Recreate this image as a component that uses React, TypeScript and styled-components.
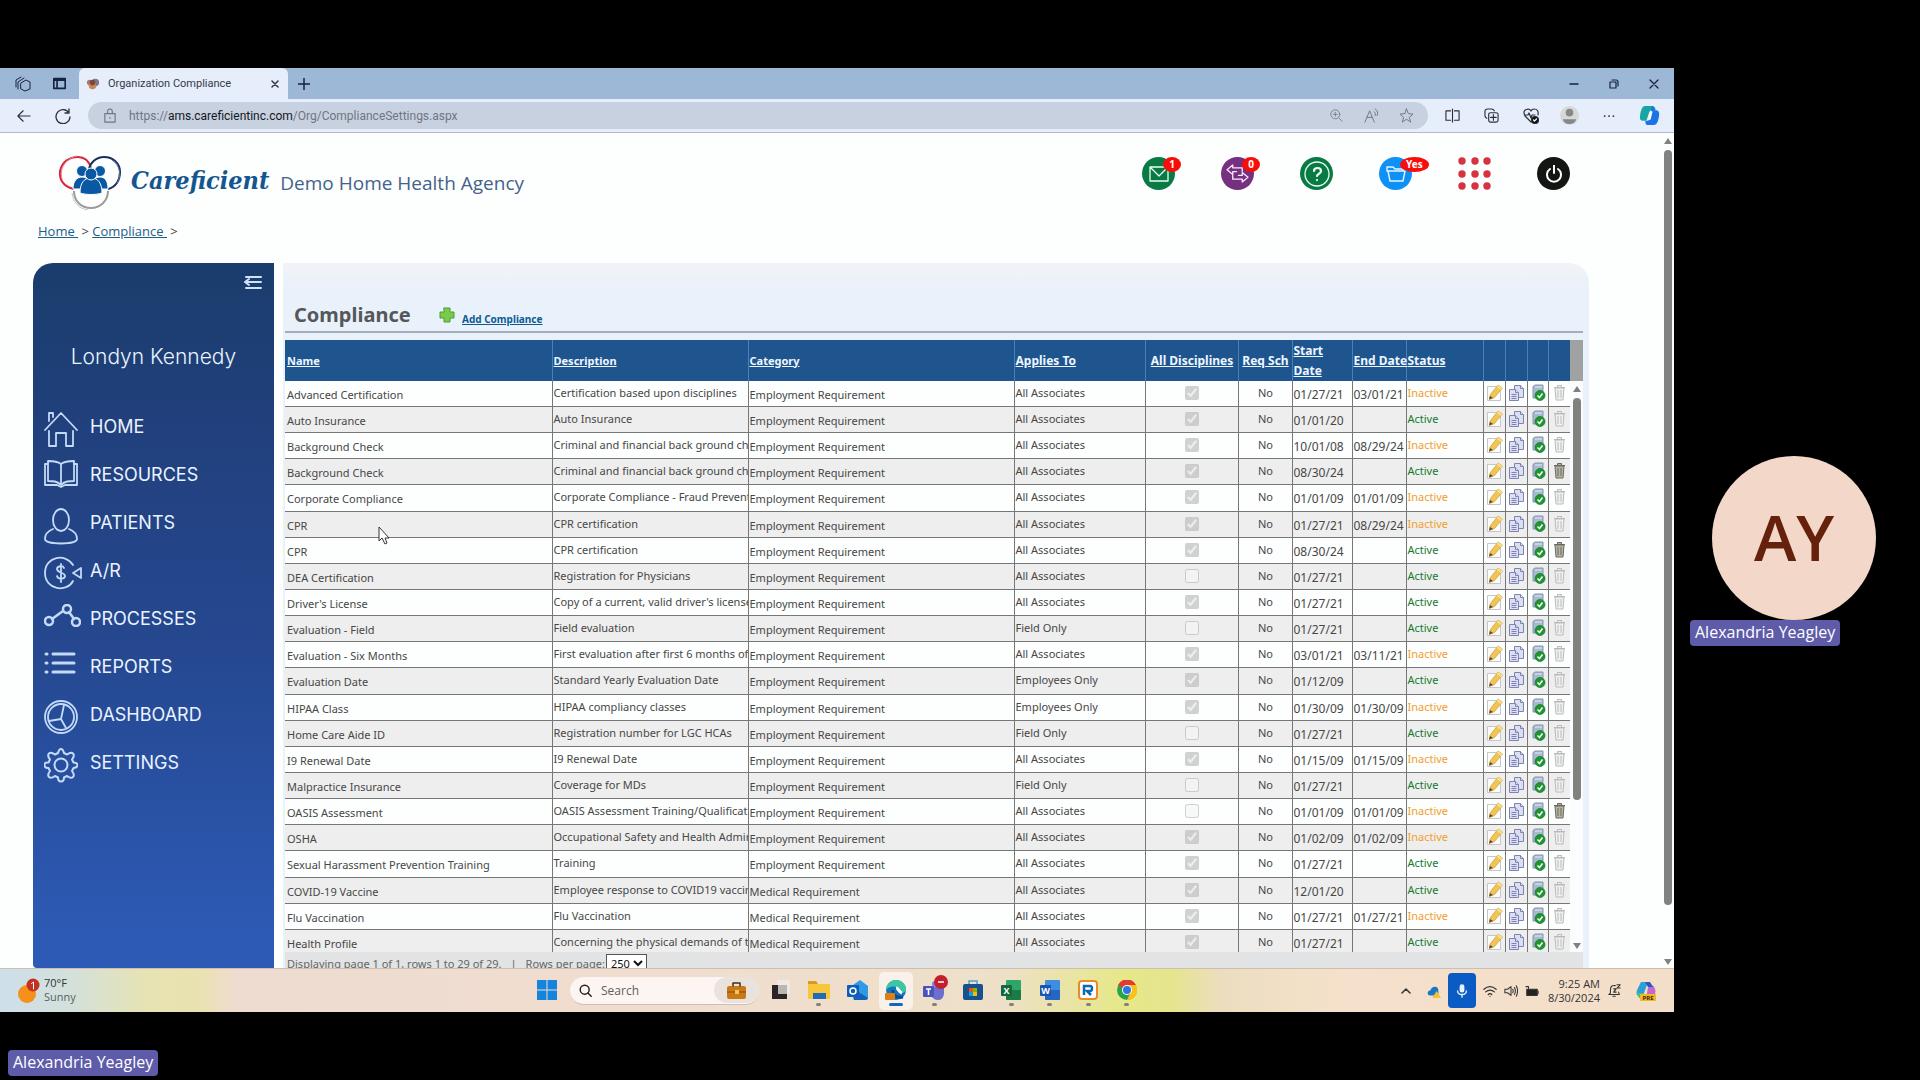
import React from "react";
import styled, { createGlobalStyle } from "styled-components";

const ui = `"Open Sans", "Noto Sans", sans-serif`;
const tahoma = `"Noto Sans", "Open Sans", sans-serif`;
const chrome = `Roboto, "Open Sans", sans-serif`;
const display = `Inter, Lato, sans-serif`;

const Global = createGlobalStyle`
  * { box-sizing: border-box; }
  html, body, #root { height: 100%; }
  body { margin: 0; background: #000; font-family: ${ui}; overflow: hidden; }
  button { border: 0; padding: 0; background: none; font: inherit; color: inherit; }
  svg { display: block; flex: none; }
`;

/* ---------- meeting stage ---------- */
const Meeting = styled.main`
  height: 100vh;
  display: grid;
  grid-template-columns: minmax(0, 1fr) 246px;
  grid-template-rows: 68px minmax(0, 1fr) 68px;
  background: #000;
`;
const Shared = styled.section`
  grid-row: 2;
  grid-column: 1;
  min-width: 0;
  min-height: 0;
  display: flex;
  flex-direction: column;
  background: #fdfefe;
`;
const Rail = styled.aside`
  grid-row: 2;
  grid-column: 2;
  display: flex;
  flex-direction: column;
  align-items: flex-start;
  justify-content: center;
  padding: 22px 16px 0;
`;
const Avatar = styled.div`
  width: 164px;
  height: 164px;
  margin-left: 22px;
  padding-bottom: 4px;
  border-radius: 50%;
  background: #f3d7c8;
  color: #66210c;
  display: flex;
  align-items: center;
  justify-content: center;
  font-size: 64px;
  font-weight: 600;
`;
const NameTag = styled.div`
  height: 26px;
  padding: 0 5px;
  border-radius: 4px;
  background: #5e5ca8;
  color: #fff;
  font-size: 16px;
  line-height: 25px;
  white-space: nowrap;
`;
const Presenter = styled.footer`
  grid-row: 3;
  grid-column: 1 / -1;
  display: flex;
  align-items: flex-end;
  padding: 0 8px 4px;
`;

/* ---------- browser ---------- */
const TabBar = styled.header`
  flex: none;
  height: 31px;
  display: flex;
  align-items: center;
  background: #9db7d7;
  color: #16233c;
`;
const TabTools = styled.div`
  width: 79px;
  display: flex;
  gap: 20px;
  padding-left: 14px;
`;
const Tab = styled.div`
  width: 209px;
  height: 31px;
  display: flex;
  align-items: center;
  gap: 8px;
  padding: 0 6px;
  border-radius: 6px 6px 0 0;
  background: #e7eefb;
  color: #333a46;
  font: 11px ${chrome};
`;
const TabTitle = styled.span`
  flex: 1;
  white-space: nowrap;
`;
const IconButton = styled.button`
  width: ${(p: { $w?: number }) => p.$w ?? 16}px;
  height: 24px;
  display: flex;
  align-items: center;
  justify-content: center;
`;
const NewTab = styled(IconButton)`
  margin-left: 8px;
`;
const WindowButtons = styled.div`
  margin-left: auto;
  display: flex;
`;
const Toolbar = styled.div`
  flex: none;
  height: 34px;
  display: flex;
  align-items: center;
  background: #e7eefb;
  border-bottom: 1px solid #b3bacb;
  color: #2b2f3a;
`;
const NavButtons = styled.div`
  width: 88px;
  display: flex;
  padding-left: 4px;
`;
const Address = styled.div`
  flex: 1;
  height: 27px;
  display: flex;
  align-items: center;
  gap: 12px;
  padding: 0 4px 0 14px;
  border-radius: 14px;
  background: #c8d1df;
  color: #6d7684;
  font: 12px ${chrome};
`;
const Url = styled.span`
  flex: 1;
  white-space: nowrap;
  b { color: #14181f; font-weight: 400; }
`;
const AddressTools = styled.div`
  display: flex;
`;
const ToolRow = styled.div`
  display: flex;
  padding: 0 4px;
`;

/* ---------- site ---------- */
const Viewport = styled.div`
  flex: 1;
  min-height: 0;
  display: flex;
  background: #fdfefe;
`;
const Site = styled.div`
  flex: 1;
  min-width: 0;
  display: flex;
  flex-direction: column;
  overflow: hidden;
`;
const Scroller = styled.div`
  flex: none;
  width: ${(p: { $w: number }) => p.$w}px;
  display: flex;
  flex-direction: column;
  align-items: center;
  padding: 5px 0 3px;
  gap: 6px;
`;
const Thumb = styled.div`
  width: 8px;
  flex: ${(p: { $grow: number }) => p.$grow};
  border-radius: 4px;
  background: #7f827f;
`;
const Spare = styled.div`
  flex: ${(p: { $grow: number }) => p.$grow};
`;
const SiteHeader = styled.header`
  flex: none;
  height: 88px;
  display: flex;
  align-items: flex-start;
  padding: 22px 92px 0 58px;
`;
const Brand = styled.span`
  margin: 8px 0 0 9px;
  color: #14568f;
  font-family: "DejaVu Serif Condensed", "DejaVu Serif", "Liberation Serif", serif;
  font-size: 25px;
  font-style: italic;
  font-weight: 700;
  line-height: 36px;
`;
const Agency = styled.span`
  margin: 12px 0 0 11px;
  color: #45628a;
  font-size: 19px;
  line-height: 32px;
  white-space: nowrap;
`;
const Shortcuts = styled.nav`
  margin-left: auto;
  padding-top: 2px;
  display: flex;
  gap: 46px;
`;
const Shortcut = styled.button`
  position: relative;
  width: 33px;
  height: 33px;
  border-radius: 50%;
  background: ${(p: { $bg: string }) => p.$bg};
  display: flex;
  align-items: center;
  justify-content: center;
`;
const Badge = styled.span`
  position: absolute;
  top: 0;
  left: 21px;
  min-width: 18px;
  height: 15px;
  padding: 0 6px;
  border-radius: 50%;
  background: #f60f0a;
  color: #fff;
  font: bold 10px/15px ${tahoma};
`;
const Crumbs = styled.nav`
  flex: none;
  height: 42px;
  padding-left: 38px;
  color: #444;
  font: 13px/20px ${ui};
  a { color: #1c6087; white-space: pre; }
`;
const Columns = styled.div`
  flex: 1;
  min-height: 0;
  display: flex;
  align-items: stretch;
  gap: 9px;
  padding: 0 73px 0 33px;
`;
const Sidebar = styled.nav`
  flex: none;
  width: 241px;
  border-radius: 20px 0 0 4px;
  background: linear-gradient(#1a3d6c, #21407d 24%, #254890 55%, #2d5ab4 95%);
  color: #eaf3ff;
  font-family: ${display};
  overflow: hidden;
`;
const Collapse = styled.button`
  display: block;
  margin: 12px 12px 0 auto;
`;
const UserName = styled.div`
  padding: 52px 0 40px;
  text-align: center;
  font-size: 21px;
  font-weight: 300;
  line-height: 30px;
`;
const MenuLink = styled.a`
  height: 48px;
  display: flex;
  align-items: flex-start;
  padding-left: 11px;
  color: inherit;
  font-size: 18px;
  line-height: 29px;
  text-decoration: none;
`;
const MenuIcon = styled.span`
  width: 46px;
`;
const Panel = styled.section`
  flex: 1;
  min-width: 0;
  border-radius: 0 20px 0 0;
  background: linear-gradient(#f1f3f8, #e9f1fb 30px);
  color: #474747;
  font-family: ${tahoma};
`;
const PanelInner = styled.div`
  padding: 0 6px 0 2px;
`;
const TitleBar = styled.div`
  height: 70px;
  display: flex;
  align-items: flex-end;
  padding: 0 0 1px 9px;
  border-bottom: 2px solid #a5adba;
`;
const Title = styled.h1`
  margin: 0;
  width: 145px;
  color: #55585a;
  font-size: 20px;
  line-height: 30px;
`;
const AddLink = styled.a`
  display: flex;
  align-items: flex-end;
  gap: 7px;
  padding-bottom: 3px;
  color: #0c5c93;
  font-size: 10px;
  font-weight: 700;
  line-height: 15px;
  svg { margin-bottom: 4px; }
`;
const GridFrame = styled.div`
  height: 612px;
  margin-top: 7px;
  display: flex;
  overflow: hidden;
`;
const TableClip = styled.div`
  flex: 1;
  min-width: 0;
  overflow: hidden;
`;
const GridScroll = styled.div`
  flex: none;
  width: 13px;
  display: flex;
  flex-direction: column;
  background: #fbfcfe;
`;
const Corner = styled.div`
  height: 41px;
  background: #a0a2a2;
`;
const ScrollTrack = styled(Scroller)`
  flex: 1;
`;
const Table = styled.table`
  width: 100%;
  height: 616px;
  table-layout: fixed;
  border-collapse: collapse;
  font-size: 11px;
  line-height: 16px;
`;
const HeadCell = styled.th`
  height: 41px;
  padding: 0 0 0 1px;
  background: #1f558f;
  border-left: 1px solid #4d7fb3;
  color: #eef6ff;
  text-align: ${(p: { $center?: boolean }) => (p.$center ? "center" : "left")};
  font-size: ${(p: { $size?: number }) => p.$size ?? 11}px;
  line-height: 20px;
  white-space: ${(p: { $wrap?: boolean }) => (p.$wrap ? "normal" : "nowrap")};
  &:first-child { border-left: 0; padding-left: 2px; }
  a { color: inherit; }
`;
const Row = styled.tr`
  background: #fdfefe;
  border-bottom: 1px solid #777;
  &:nth-child(even) { background: #eeeeee; }
`;
const Cell = styled.td`
  padding: ${(p: { $low?: boolean; $center?: boolean; $date?: boolean }) => (p.$low || p.$date ? "3px 0 0 1px" : "0 0 1px 1px")};
  border-left: 1px solid #777;
  text-align: ${(p) => (p.$center ? "center" : "left")};
  font-size: ${(p) => (p.$date ? 12 : 11)}px;
  white-space: nowrap;
  overflow: hidden;
  &:first-child { border-left: 0; padding-left: 2px; }
`;
const Status = styled.span`
  color: ${(p: { $active: boolean }) => (p.$active ? "#167a2e" : "#f2a02c")};
`;
const Check = styled.input`
  display: block;
  width: 14px;
  height: 14px;
  margin: 0 auto;
`;
const RowAction = styled.button`
  display: flex;
  align-items: center;
  justify-content: center;
  width: 100%;
`;
const Pager = styled.div`
  height: 24px;
  display: flex;
  align-items: center;
  gap: 9px;
  padding: 0 0 2px 2px;
  background: #e1e3e4;
  color: #666;
  font-size: 11px;
  white-space: nowrap;
`;
const PageSize = styled.select`
  height: 18px;
  margin-left: 1px;
  padding: 0;
  border: 1px solid #555;
  background: #fff;
  color: #111;
  font: 11px ${tahoma};
`;
const Pointer = styled.svg`
  position: absolute;
  left: 378px;
  top: 526px;
`;

/* ---------- taskbar ---------- */
const Taskbar = styled.footer`
  flex: none;
  height: 44px;
  display: grid;
  grid-template-columns: 1fr auto 1fr;
  align-items: center;
  border-top: 1px solid #cbbfb4;
  background: linear-gradient(90deg, #cddfea 0, #d3e0dc 4%, #e7e3b2 9%, #e9e2b0 12%, #efdcd0 14%, #f0ddd0 40%, #eee0c8 60%, #e6e889 67%, #e5e58e 70%, #ecddc0 73%, #f5e1cb 80%, #f3dfc9 100%);
  color: #333;
  font-size: 11px;
  line-height: 14px;
`;
const Weather = styled.button`
  display: flex;
  align-items: center;
  gap: 4px;
  padding: 0 0 2px 18px;
  text-align: left;
  span { display: block; color: #5b5f60; }
`;
const Dock = styled.div`
  display: flex;
  align-items: center;
`;
const Apps = styled.div`
  width: 381px;
  display: flex;
  justify-content: space-between;
`;
const SearchBox = styled.label`
  width: 189px;
  height: 28px;
  display: flex;
  align-items: center;
  gap: 9px;
  margin: 0 4px 0 6px;
  padding-left: 9px;
  border-radius: 14px;
  background: #fdf5f1;
  border-bottom: 1px solid #cdbfb6;
  input {
    flex: 1;
    min-width: 0;
    padding: 0;
    border: 0;
    outline: 0;
    background: none;
    color: #555;
    font: 12px ${ui};
  }
  input::placeholder { color: #5f5f5f; opacity: 1; }
`;
const Work = styled.span`
  width: 45px;
  height: 26px;
  border-radius: 13px;
  background: #eae3dd;
  display: flex;
  align-items: center;
  justify-content: center;
`;
const DockButton = styled.button`
  width: 34px;
  height: 38px;
  border-radius: 5px;
  display: flex;
  flex-direction: column;
  align-items: center;
  gap: 3px;
  padding-top: 8px;
  background: ${(p: { $mark?: string }) => (p.$mark === "active" ? "#faf1ea" : "none")};
  &::after {
    content: "";
    width: ${(p) => (p.$mark === "active" ? 14 : 5)}px;
    height: 3px;
    border-radius: 2px;
    background: ${(p) => (p.$mark === "active" ? "#1566c0" : p.$mark === "open" ? "#85807a" : "transparent")};
  }
`;
const Tray = styled.div`
  display: flex;
  align-items: center;
  justify-content: flex-end;
  padding-right: 18px;
`;
const Mic = styled.button`
  width: 28px;
  height: 35px;
  margin-right: 4px;
  border-radius: 4px;
  background: #0a5bc4;
  display: flex;
  align-items: center;
  justify-content: center;
`;
const Clock = styled.time`
  width: 58px;
  margin-right: 6px;
  font-size: 11px;
  text-align: right;
`;
const TrayButton = styled.button`
  width: ${(p: { $w: number }) => p.$w}px;
  display: flex;
  justify-content: center;
`;
const CopilotPre = styled.button`
  margin-left: 13px;
`;

/* ---------- drawings ---------- */
type G = { w?: number; h?: number; box?: string; sw?: number; fill?: string; stroke?: string; children: React.ReactNode };
const Glyph = ({ w = 16, h, box = "0 0 16 16", sw = 1, fill = "none", stroke = "currentColor", children }: G) => (
  <svg width={w} height={h ?? w} viewBox={box} fill={fill} stroke={stroke} strokeWidth={sw} strokeLinecap="round" strokeLinejoin="round" aria-hidden="true">
    {children}
  </svg>
);

const Logo = () => (
  <svg width="64" height="55" viewBox="0 0 64 55" fill="none" aria-hidden="true">
    <path d="M16 34C6 32 1 25 2 16 4 7 11 2 20 2c6 0 11 4 13 11" stroke="#d8263c" strokeWidth="2" />
    <path d="M4 24C1 12 9 3 19 1" stroke="#e8808c" strokeWidth="1" />
    <path d="M31 14c1-6 7-12 15-12 9 0 16 6 16 15 0 8-4 15-12 17" stroke="#17305e" strokeWidth="2" />
    <path d="M54 5c8 5 10 16 5 23" stroke="#5672a4" strokeWidth="1" />
    <path d="M16 36c0 10 7 17 17 17 9 0 17-7 17-17" stroke="#9a9c9e" strokeWidth="2" />
    <path d="M14 38c1 9 7 16 16 17" stroke="#c4c5c7" strokeWidth="1" />
    <g fill="#0a58a4" stroke="#fdfefe" strokeWidth="1">
      <circle cx="24" cy="16" r="5.500" />
      <circle cx="42" cy="16" r="5.500" />
      <path d="M15 34c0-8 4-12 9-12s9 4 9 12z" />
      <path d="M33 34c0-8 4-12 9-12s8 4 8 12z" />
      <path d="M22 38c0-10 4-15 11-15s11 5 11 15c-6 2-16 2-22 0z" />
      <circle cx="33" cy="19" r="6" />
    </g>
  </svg>
);

const menu: [string, React.ReactNode, number, number][] = [
  ["HOME", <><path d="M1 18 17 1l16 17M5 9V1h4v4" /><path d="M5 19v15h7V21h10v13h7V19" /></>, 34, 35],
  ["RESOURCES", <><path d="M17 4C13 1 9 1 4 1v20c5 0 9 0 13 4 4-4 8-4 13-4V1c-5 0-9 0-13 3zV25" /><path d="M4 4H1v21h12l4 2 4-2h12V4h-3" /></>, 34, 28],
  ["PATIENTS", <><ellipse cx="17" cy="12" rx="8" ry="11" /><path d="M9 21c-5 2-8 6-8 10 0 6 32 6 32 0 0-4-3-8-8-10" /></>, 34, 37],
  ["A/R", <><path d="M29 9C22-3 1 0 1 17s22 20 28 8" /><path d="M37 12v10l-8-5z" /><path d="M20 12c-1-3-7-2-7 1 0 4 8 3 8 7 0 3-7 4-8 0M17 8v18" /></>, 38, 34],
  ["PROCESSES", <g strokeWidth="2.500"><circle cx="5" cy="17" r="4" /><circle cx="23" cy="5" r="4" /><circle cx="32" cy="18" r="4" /><path d="m8 15 11-8M25 8l5 7" /></g>, 37, 23],
  ["REPORTS", <g strokeWidth="3"><path d="M2 2h1M2 11h1M2 20h1M9 2h21M9 11h21M9 20h21" /></g>, 32, 22],
  ["DASHBOARD", <><circle cx="17" cy="17" r="16" /><circle cx="17" cy="17" r="13" /><path d="m17 19-12 2M17 19l5 9M17 19l3-14" /></>, 34, 34],
  ["SETTINGS", <g strokeWidth="2"><circle cx="17" cy="17" r="6.500" /><path d="M14 5q1-4 3-4t3 4l3 1.500q4-3 6-1t-1 6l1.500 3q4 0 4 2.500t-4 3L28 23q3 4 1 6t-6-1l-3 1.500q0 4-3 4t-3-4L11 28q-4 3-6 1t1-6l-1.500-3q-4 0-4-3t4-2.500L6 11.500q-3-4-1-6t6 1z" /></g>, 34, 35],
];

const Pencil = () => (
  <svg width="17" height="18" viewBox="0 0 17 18" aria-hidden="true">
    <path d="M1.500 2.500h13v14h-13z" fill="#fcfcfc" stroke="#c4c6cc" />
    <path d="m4 11 8-10 4.500 3-8 9.500-5 2z" fill="#f0c552" stroke="#c99b3c" strokeWidth=".7" />
    <path d="m12 1 4.500 3-1.500 2-4.500-3z" fill="#f7dd8c" />
    <path d="m3 15.500 1-3.500 3 2z" fill="#5b4630" />
  </svg>
);
const Copy = () => (
  <svg width="17" height="18" viewBox="0 0 17 18" fill="#dcdff0" stroke="#7f82b4" aria-hidden="true">
    <path d="M6.500 1.500h6l3 3v9h-9z" />
    <path d="M1.500 5.500h6l3 3v8h-9z" />
    <path d="M7.500 5.500v3h3M3.500 10.500h5M3.500 12.500h5M3.500 14.500h5M12.500 1.500v3h3" />
  </svg>
);
const Approve = () => (
  <svg width="15" height="18" viewBox="0 0 15 18" aria-hidden="true">
    <path d="M2 2.500 4 1h8v13H2z" fill="#a7b8cf" stroke="#8496b0" />
    <path d="M4 3h7" stroke="#e4ebf4" />
    <circle cx="9" cy="11.500" r="5" fill="#1c962d" stroke="#11752a" strokeWidth=".7" />
    <path d="m6.500 11.500 2 2 3-4" fill="none" stroke="#fff" strokeWidth="1.500" />
  </svg>
);
const Trash = ({ on }: { on: boolean }) => (
  <svg width="13" height="18" viewBox="0 0 13 18" fill={on ? "#b5b3a4" : "#f1f1f1"} stroke={on ? "#6b6a5c" : "#b9babb"} aria-hidden="true">
    <path d="m2 4 1 12h7l1-12z" />
    <path d="M1 3.500h11M4.500 3V1.500h4V3M5 6v8M8 6v8" />
  </svg>
);
const Arrow = ({ down }: { down?: boolean }) => (
  <svg width="8" height="6" viewBox="0 0 8 6" aria-hidden="true">
    <path d={down ? "M0 0h8L4 6z" : "M0 6h8L4 0z"} fill="#7f827f" />
  </svg>
);

/* ---------- data ---------- */
type Item = [string, string, string, string, boolean, string, string, boolean, boolean?];
const E = "Employment Requirement";
const M = "Medical Requirement";
const A = "All Associates";
const rows: Item[] = [
  ["Advanced Certification", "Certification based upon disciplines", E, A, true, "01/27/21", "03/01/21", false],
  ["Auto Insurance", "Auto Insurance", E, A, true, "01/01/20", "", true],
  ["Background Check", "Criminal and financial back ground check", E, A, true, "10/01/08", "08/29/24", false],
  ["Background Check", "Criminal and financial back ground check", E, A, true, "08/30/24", "", true, true],
  ["Corporate Compliance", "Corporate Compliance - Fraud Prevention", E, A, true, "01/01/09", "01/01/09", false],
  ["CPR", "CPR certification", E, A, true, "01/27/21", "08/29/24", false],
  ["CPR", "CPR certification", E, A, true, "08/30/24", "", true, true],
  ["DEA Certification", "Registration for Physicians", E, A, false, "01/27/21", "", true],
  ["Driver's License", "Copy of a current, valid driver's license", E, A, true, "01/27/21", "", true],
  ["Evaluation - Field", "Field evaluation", E, "Field Only", false, "01/27/21", "", true],
  ["Evaluation - Six Months", "First evaluation after first 6 months of", E, A, true, "03/01/21", "03/11/21", false],
  ["Evaluation Date", "Standard Yearly Evaluation Date", E, "Employees Only", true, "01/12/09", "", true],
  ["HIPAA Class", "HIPAA compliancy classes", E, "Employees Only", true, "01/30/09", "01/30/09", false],
  ["Home Care Aide ID", "Registration number for LGC HCAs", E, "Field Only", false, "01/27/21", "", true],
  ["I9 Renewal Date", "I9 Renewal Date", E, A, true, "01/15/09", "01/15/09", false],
  ["Malpractice Insurance", "Coverage for MDs", E, "Field Only", false, "01/27/21", "", true],
  ["OASIS Assessment", "OASIS Assessment Training/Qualification", E, A, false, "01/01/09", "01/01/09", false, true],
  ["OSHA", "Occupational Safety and Health Administration", E, A, true, "01/02/09", "01/02/09", false],
  ["Sexual Harassment Prevention Training", "Training", E, A, true, "01/27/21", "", true],
  ["COVID-19 Vaccine", "Employee response to COVID19 vaccine", M, A, true, "12/01/20", "", true],
  ["Flu Vaccination", "Flu Vaccination", M, A, true, "01/27/21", "01/27/21", false],
  ["Health Profile", "Concerning the physical demands of the", M, A, true, "01/27/21", "", true],
];
const widths = [267, 196, undefined, 131, 93, 54, 60, 54, 77, 22, 22, 21, 22];

const OfficeTile = ({ letter, dark, light }: { letter: string; dark: string; light: string }) => (
  <svg width="20" height="20" viewBox="0 0 20 20" aria-hidden="true">
    <rect x="5" y="0" width="15" height="20" rx="1" fill={light} />
    <path d="M5 10h15v9a1 1 0 0 1-1 1H6a1 1 0 0 1-1-1z" fill={dark} opacity=".7" />
    <rect x="0" y="5" width="11" height="11" rx="1" fill={dark} />
    <text x="5.500" y="14" fill="#fff" fontSize="9" fontWeight="700" textAnchor="middle" fontFamily="Open Sans">{letter}</text>
  </svg>
);

const apps: [string, string, React.ReactNode][] = [
  ["Task view", "", <svg width="20" height="20" viewBox="0 0 20 20"><path d="M7 0h13v14H7z" fill="#efe9e5" /><path d="M2 5h6v9h9v5H2z" fill="#2b2524" /><path d="M8 5h9v9H8z" fill="#bdb5b1" /></svg>],
  ["File Explorer", "open", <svg width="22" height="20" viewBox="0 0 22 20"><path d="M0 2q0-1 1-1h7l2 3h11q1 0 1 1v13q0 1-1 1H1q-1 0-1-1z" fill="#f7c63a" /><path d="M0 2q0-1 1-1h7l2 3H0z" fill="#d99a1c" /><path d="M5 13h13v6H5z" fill="#1e6cb8" /></svg>],
  ["Outlook", "", <svg width="21" height="20" viewBox="0 0 21 20"><path d="m6 5 7-5 8 6v12q0 2-2 2H8q-2 0-2-2z" fill="#2f9be6" /><path d="m7 9 14 9q-1 2-3 2H7z" fill="#1462b8" /><rect y="5" width="12" height="12" rx="1" fill="#0f5db5" /><circle cx="6" cy="11" r="3" fill="none" stroke="#fff" strokeWidth="1.500" /></svg>],
  ["Edge", "active", <svg width="22" height="20" viewBox="0 0 22 20"><circle cx="11" cy="10" r="10" fill="#1574c4" /><path d="M1 10C1 4 6 0 11 0c6 0 11 5 10 10-1 4-7 4-8 1 1-4-6-7-12-1z" fill="#3cc6a4" /><path d="M8 10c-1 6 4 8 10 7" stroke="#0d4a8f" strokeWidth="3" fill="none" /><path d="M11 8c3 0 2 4 6 5" stroke="#fff" strokeWidth="3" fill="none" /><rect y="13" width="10" height="7" rx="1" fill="#d98117" /></svg>],
  ["Teams", "open", <svg width="22" height="20" viewBox="0 0 22 20" overflow="visible"><circle cx="12" cy="4" r="3" fill="#7b83eb" /><path d="M8 7h13v7q-1 6-6 6t-7-5z" fill="#6a6fd0" /><rect y="6" width="11" height="11" rx="1" fill="#4b53bc" /><path d="M3 9h5M5.500 9v6" stroke="#fff" strokeWidth="1.500" /><circle cx="18" cy="2" r="7" fill="#c4202c" /><path d="M15 2h6" stroke="#fff" strokeWidth="1.500" /></svg>],
  ["Store", "", <svg width="20" height="20" viewBox="0 0 20 20"><path d="M6 5V1h8v4" fill="none" stroke="#4ba3da" strokeWidth="1.500" /><rect y="4" width="20" height="16" rx="2" fill="#17508a" /><path d="M6 8h4v4H6z" fill="#f25022" /><path d="M10 8h4v4h-4z" fill="#7fba00" /><path d="M6 12h4v4H6z" fill="#00a4ef" /><path d="M10 12h4v4h-4z" fill="#ffb900" /></svg>],
  ["Excel", "open", <OfficeTile letter="X" dark="#12693b" light="#2fa567" />],
  ["Word", "open", <OfficeTile letter="W" dark="#1b55b3" light="#3d8ee0" />],
  ["RingCentral", "open", <svg width="20" height="20" viewBox="0 0 20 20"><rect x="1" y="1" width="18" height="18" rx="3" fill="#fff" stroke="#e98a2b" strokeWidth="2" /><path d="M6 15V6h6q2 0 2 2.500T12 11H9l4 4" fill="none" stroke="#0b6ab0" strokeWidth="2.500" /></svg>],
  ["Chrome", "open", <svg width="20" height="20" viewBox="0 0 20 20"><circle cx="10" cy="10" r="10" fill="#2ba24c" /><path d="M10 10 1 5A10 10 0 0 1 19 5z" fill="#e33b2e" /><path d="M10 5h9a10 10 0 0 1-9 15l4-9z" fill="#fbc116" /><circle cx="10" cy="10" r="5" fill="#fff" /><circle cx="10" cy="10" r="4" fill="#2f74e0" /></svg>],
];

const heads = ["Name", "Description", "Category", "Applies To", "All Disciplines", "Req Sch", "Start Date", "End Date", "Status"];

export default function App() {
  return (
    <Meeting>
      <Global />
      <Shared>
        <TabBar>
          <TabTools>
            <IconButton $w={18} aria-label="Workspaces">
              <Glyph><path d="m6 7 5-3 4 2v7l-5 2-4-2zM3 13V6l6-4M1 11V4l5-3" /></Glyph>
            </IconButton>
            <IconButton $w={14} aria-label="Tab actions">
              <Glyph w={13} sw={2}><path d="M1 2h14v12H1zM1 4h14M5 5v9" /></Glyph>
            </IconButton>
          </TabTools>
          <Tab>
            <Glyph w={15} stroke="none"><circle cx="5" cy="7" r="3" fill="#b0757a" /><circle cx="11" cy="7" r="4" fill="#7d7686" /><circle cx="8" cy="10" r="4" fill="#c08a5c" /><circle cx="8" cy="7" r="3" fill="#7c4a3c" /></Glyph>
            <TabTitle>Organization Compliance</TabTitle>
            <IconButton $w={14} aria-label="Close tab">
              <Glyph w={8} box="0 0 8 8" sw={1.5}><path d="m1 1 6 6M7 1 1 7" /></Glyph>
            </IconButton>
          </Tab>
          <NewTab aria-label="New tab">
            <Glyph w={12} box="0 0 12 12" sw={1.5}><path d="M6 0v12M0 6h12" /></Glyph>
          </NewTab>
          <WindowButtons>
            <IconButton $w={40} aria-label="Minimize"><Glyph w={10} box="0 0 10 10" sw={1.5}><path d="M1 5h8" /></Glyph></IconButton>
            <IconButton $w={40} aria-label="Restore"><Glyph w={10} box="0 0 10 10" sw={1.2}><path d="M1 3h6v6H1zM3 1h4q2 0 2 2v4" /></Glyph></IconButton>
            <IconButton $w={40} aria-label="Close"><Glyph w={10} box="0 0 10 10" sw={1.3}><path d="m1 1 8 8M9 1 1 9" /></Glyph></IconButton>
          </WindowButtons>
        </TabBar>
        <Toolbar>
          <NavButtons>
            <IconButton $w={39} aria-label="Back"><Glyph w={14} sw={1.3}><path d="M15 8H1l6-6M1 8l6 6" /></Glyph></IconButton>
            <IconButton $w={39} aria-label="Refresh"><Glyph w={16} sw={1.3}><path d="M14 5A7 7 0 1 0 15 9M14 1v4h-4" /></Glyph></IconButton>
          </NavButtons>
          <Address>
            <Glyph w={15} sw={1.2}><path d="M3 6h11v9H3zM6 6V4q0-3 2.500-3T11 4v2M8.500 10v1" /></Glyph>
            <Url>https://<b>ams.careficientinc.com</b>/Org/ComplianceSettings.aspx</Url>
            <AddressTools>
              <IconButton $w={35} aria-label="Zoom"><Glyph w={13}><circle cx="6.500" cy="6.500" r="5.500" /><path d="m11 11 4 4M4 6.500h5M6.500 4v5" /></Glyph></IconButton>
              <IconButton $w={35} aria-label="Read aloud"><Glyph w={15}><path d="M1 15 6 3l5 12M3 10h6M11 4q2 1 1 4M12 1q4 3 2 7" /></Glyph></IconButton>
              <IconButton $w={35} aria-label="Add to favorites"><Glyph w={15}><path d="m8 1 2 5 5 .5-4 3.500 1.500 5L8 12l-4.500 3L5 10 1 6.500 6 6z" /></Glyph></IconButton>
            </AddressTools>
          </Address>
          <ToolRow>
            <IconButton $w={40} aria-label="Split screen"><Glyph w={15} sw={1.2}><path d="M6 3H1v10h5M10 3h5v10h-5M8 1v14" /></Glyph></IconButton>
            <IconButton $w={39} aria-label="Collections"><Glyph w={15} sw={1.2}><rect x="5" y="5" width="10" height="10" rx="2" /><path d="M10 7v6M7 10h6M3 11q-2-1-2-3V4q0-3 3-3h4q2 0 3 2" /></Glyph></IconButton>
            <IconButton $w={39} aria-label="Browser essentials"><Glyph w={16} sw={1.2}><path d="M8 14 2 8q-3-6 3-7 2 0 3 2 1-2 3-2 5 0 4 6M2 7h3l1-2 2 5 1-3h3" /><circle cx="12" cy="12" r="3.500" fill="#111" /><path d="m10.500 12 1 1 2-2" stroke="#fff" /></Glyph></IconButton>
            <IconButton $w={39} aria-label="Profile"><Glyph w={19} stroke="none" box="0 0 20 20"><circle cx="10" cy="10" r="10" fill="#d7d8d8" /><circle cx="10" cy="7" r="4" fill="#868889" /><path d="M3 14h14q-1 5-7 5t-7-5z" fill="#868889" /></Glyph></IconButton>
            <IconButton $w={40} aria-label="Menu"><Glyph w={14} sw={2}><path d="M3 8h.1M8 8h.1M13 8h.1" /></Glyph></IconButton>
            <IconButton $w={41} aria-label="Copilot"><Glyph w={21} box="0 0 20 20" stroke="none"><path d="M5 1h8q2 0 3 4h-4q-2 0-3 4l-2 6H4q-4 0-3-5 1-8 4-9z" fill="#18a6a4" /><path d="M12 1q2 0 3 4h2q3 1 2 6-1 8-5 8H8q-2 0-2-4h2q2 0 3-4z" fill="#1a74e8" /><path d="m9 14 2-8h2l-2 8z" fill="#fff" /></Glyph></IconButton>
          </ToolRow>
        </Toolbar>

        <Viewport>
          <Site>
            <SiteHeader>
              <Logo />
              <Brand>Careficient</Brand>
              <Agency>Demo Home Health Agency</Agency>
              <Shortcuts>
                <Shortcut $bg="#0a7a45" aria-label="Messages">
                  <Glyph w={20} box="0 0 20 20" stroke="#e8fff2" sw={1.3}><path d="M1 3h18v14H1zM2 4l8 8 8-8" /></Glyph>
                  <Badge>1</Badge>
                </Shortcut>
                <Shortcut $bg="#75307f" aria-label="Transfers">
                  <Glyph w={23} h={19} box="0 0 24 20" stroke="#fbe8ff" sw={1.4}><path d="M17 8V4H7V1L1 6l6 5V8h4M7 12v4h10v3l6-5-6-5v3h-4" /></Glyph>
                  <Badge>0</Badge>
                </Shortcut>
                <Shortcut $bg="#0a7a45" aria-label="Help">
                  <Glyph w={26} box="0 0 26 26" stroke="#e8fff2" sw={1.3}><circle cx="13" cy="13" r="12" /><path d="M10 10c0-4 7-4 7 0 0 3-4 3-4 5M13 19v.1" strokeWidth="2.200" /></Glyph>
                </Shortcut>
                <Shortcut $bg="#0e91f6" aria-label="Documents">
                  <Glyph w={20} box="0 0 20 20" stroke="#e6f6ff" sw={1.4}><path d="M4 17 2 7h17l-2 10zM1 7V3h6l2 2h8v2" /></Glyph>
                  <Badge>Yes</Badge>
                </Shortcut>
                <Shortcut $bg="transparent" aria-label="Apps">
                  <Glyph w={33} box="0 0 33 33" stroke="none">
                    {[4, 17, 29].map((y) => [4, 17, 29].map((x) => <circle key={`${x}-${y}`} cx={x} cy={y} r="3.700" fill="#d6323f" />))}
                  </Glyph>
                </Shortcut>
                <Shortcut $bg="#141614" aria-label="Log out">
                  <Glyph w={18} box="0 0 18 18" stroke="#fff" sw={2}><path d="M5 4a7 7 0 1 0 8 0M9 0v8" /></Glyph>
                </Shortcut>
              </Shortcuts>
            </SiteHeader>
            <Crumbs aria-label="Breadcrumb">
              <a href="#home">{"Home "}</a> &gt; <a href="#compliance">{"Compliance "}</a> &gt;
            </Crumbs>
            <Columns>
              <Sidebar>
                <Collapse aria-label="Collapse menu">
                  <Glyph w={18} h={15} box="0 0 18 15" sw={2} stroke="#cfe2f8"><path d="M2 2h15M1 7h16M2 13h15M5 4 1 7l4 3" /></Glyph>
                </Collapse>
                <UserName>Londyn Kennedy</UserName>
                {menu.map(([name, art, w, h]) => (
                  <MenuLink key={name} href={`#${name.toLowerCase()}`}>
                    <MenuIcon>
                      <Glyph w={w} h={h} box={`0 0 ${w} ${h}`} sw={1.8} stroke="#c3daf8">{art}</Glyph>
                    </MenuIcon>
                    {name}
                  </MenuLink>
                ))}
              </Sidebar>
              <Panel>
                <PanelInner>
                  <TitleBar>
                    <Title>Compliance</Title>
                    <AddLink href="#add">
                      <Glyph w={16} stroke="#4c9a35"><path d="M5 1h6v4h4v6h-4v4H5v-4H1V5h4z" fill="#79cc4b" /></Glyph>
                      Add Compliance
                    </AddLink>
                  </TitleBar>
                  <GridFrame>
                    <TableClip>
                      <Table>
                        <colgroup>{widths.map((w, i) => <col key={i} width={w} />)}</colgroup>
                        <thead>
                          <tr>
                            {heads.map((h, i) => (
                              <HeadCell key={h} scope="col" $size={i > 2 ? 12 : 11} $center={i === 4 || i === 5} $wrap={i === 6}>
                                <a href="#sort">{h}</a>
                              </HeadCell>
                            ))}
                            {[0, 1, 2, 3].map((i) => <HeadCell key={i} />)}
                          </tr>
                        </thead>
                        <tbody>
                          {rows.map(([name, desc, cat, who, all, start, end, active, del], i) => (
                            <Row key={i}>
                              <Cell $low>{name}</Cell>
                              <Cell>{desc}</Cell>
                              <Cell $low>{cat}</Cell>
                              <Cell>{who}</Cell>
                              <Cell $center><Check type="checkbox" disabled checked={all} readOnly aria-label={`All disciplines: ${name}`} /></Cell>
                              <Cell $center>No</Cell>
                              <Cell $date>{start}</Cell>
                              <Cell $date>{end}</Cell>
                              <Cell><Status $active={active}>{active ? "Active" : "Inactive"}</Status></Cell>
                              <Cell><RowAction aria-label="Edit"><Pencil /></RowAction></Cell>
                              <Cell><RowAction aria-label="Copy"><Copy /></RowAction></Cell>
                              <Cell><RowAction aria-label="Approve"><Approve /></RowAction></Cell>
                              <Cell><RowAction aria-label="Delete" disabled={!del}><Trash on={!!del} /></RowAction></Cell>
                            </Row>
                          ))}
                        </tbody>
                      </Table>
                    </TableClip>
                    <GridScroll>
                      <Corner />
                      <ScrollTrack $w={13}>
                        <Arrow />
                        <Thumb $grow={406} />
                        <Spare $grow={132} />
                        <Arrow down />
                      </ScrollTrack>
                    </GridScroll>
                  </GridFrame>
                  <Pager>
                    <span>Displaying page 1 of 1, rows 1 to 29 of 29.</span>
                    <span>|</span>
                    <label>
                      Rows per page:
                      <PageSize defaultValue="250"><option>250</option></PageSize>
                    </label>
                  </Pager>
                </PanelInner>
              </Panel>
            </Columns>
          </Site>
          <Scroller $w={12}>
            <Arrow />
            <Thumb $grow={763} />
            <Spare $grow={42} />
            <Arrow down />
          </Scroller>
        </Viewport>

        <Taskbar>
          <Weather>
            <Glyph w={22} h={26} box="0 0 22 26" stroke="none"><circle cx="9" cy="17" r="9" fill="#f5911b" /><circle cx="15" cy="8" r="6.500" fill="#c43021" /><path d="M13.500 6.500 15.500 5v7" stroke="#fff" /></Glyph>
            <div>70°F<span>Sunny</span></div>
          </Weather>
          <Dock>
            <DockButton aria-label="Start">
              <Glyph w={20} box="0 0 20 20" stroke="none" fill="#1584dc"><path d="M0 0h9.500v9.500H0zM10.500 0H20v9.500h-9.500zM0 10.500h9.500V20H0zM10.500 10.500H20V20h-9.500z" /></Glyph>
            </DockButton>
            <SearchBox>
              <Glyph w={13} sw={1.8} stroke="#222"><circle cx="7" cy="7" r="5.500" /><path d="m11 11 4 4" /></Glyph>
              <input placeholder="Search" aria-label="Search" />
              <Work><Glyph w={19} h={17} box="0 0 19 17" stroke="none"><rect y="4" width="19" height="13" rx="2" fill="#c97a16" /><path d="M6 4V1h7v3" fill="none" stroke="#4a2d0c" strokeWidth="1.500" /><path d="M0 10h19" stroke="#8a4d0c" /><rect x="8" y="8" width="4" height="4" fill="#f6c35a" /></Glyph></Work>
            </SearchBox>
            <Apps>
              {apps.map(([name, mark, art]) => <DockButton key={name} $mark={mark} aria-label={name}>{art}</DockButton>)}
            </Apps>
          </Dock>
          <Tray>
            <TrayButton $w={28} aria-label="Hidden icons"><Glyph w={10} box="0 0 10 10" sw={1.5}><path d="m1 7 4-4 4 4" /></Glyph></TrayButton>
            <TrayButton $w={28} aria-label="OneDrive"><Glyph w={14} stroke="none"><path d="M3 13q-3-1-2-4 1-2 3-2 1-4 5-4 4 0 4 5v5z" fill="#1777c9" /><path d="m11 8 5 8H6z" fill="#f6c12c" /></Glyph></TrayButton>
            <Mic aria-label="Microphone"><Glyph w={14} sw={1.5} stroke="#eaf4ff"><rect x="6" y="1" width="4" height="8" rx="2" fill="#eaf4ff" /><path d="M3 8q0 4 5 4t5-4M8 12v3" /></Glyph></Mic>
            <TrayButton $w={20} aria-label="Network"><Glyph w={14} sw={1.4}><path d="M1 6q7-6 14 0M3 9q5-4 10 0M6 12q2-2 4 0M8 14h.1" /></Glyph></TrayButton>
            <TrayButton $w={21} aria-label="Volume"><Glyph w={14} sw={1.2}><path d="M1 6h3l4-3v10l-4-3H1zM10 6q1 2 0 4M12 4q2 4 0 8M14 2q3 6 0 12" /></Glyph></TrayButton>
            <TrayButton $w={21} aria-label="Battery"><Glyph w={14} sw={1.2}><path d="M2 6h12v7H2z" fill="#222" /><path d="M15 8v3M1 3h3v2" /></Glyph></TrayButton>
            <Clock>9:25 AM<br />8/30/2024</Clock>
            <TrayButton $w={17} aria-label="Notifications"><Glyph w={13} sw={1.3}><path d="M9 2Q3 1 3 7v4l-2 2h13l-1-3M6 15h3M11 1h4l-4 4h4M7 6h3l-3 4h3" /></Glyph></TrayButton>
            <CopilotPre aria-label="Copilot preview">
              <Glyph w={20} box="0 0 20 20" stroke="none"><path d="M5 1h7l-5 14H2q-3-2 0-8z" fill="#2b9fd6" /><path d="M9 1h5q2 4 4 5h-6z" fill="#2759c8" /><path d="m12 6 6 0q3 4 0 9l-8 3z" fill="#c768c9" /><path d="M1 12h6l-2 5H3z" fill="#4fbf6d" /><rect x="4" y="13" width="16" height="7" rx="1" fill="#f2b722" /><text x="12" y="19" fontSize="6" fontWeight="700" textAnchor="middle" fill="#3b2a07" fontFamily="Open Sans">PRE</text></Glyph>
            </CopilotPre>
          </Tray>
        </Taskbar>
      </Shared>
      <Rail>
        <Avatar>AY</Avatar>
        <NameTag>Alexandria Yeagley</NameTag>
      </Rail>
      <Presenter><NameTag>Alexandria Yeagley</NameTag></Presenter>
      <Pointer width="13" height="19" viewBox="0 0 13 19" aria-hidden="true">
        <path d="M1 1v14l3-3 3 6 2-1-2-5h4z" fill="#fff" stroke="#333" />
      </Pointer>
    </Meeting>
  );
}
